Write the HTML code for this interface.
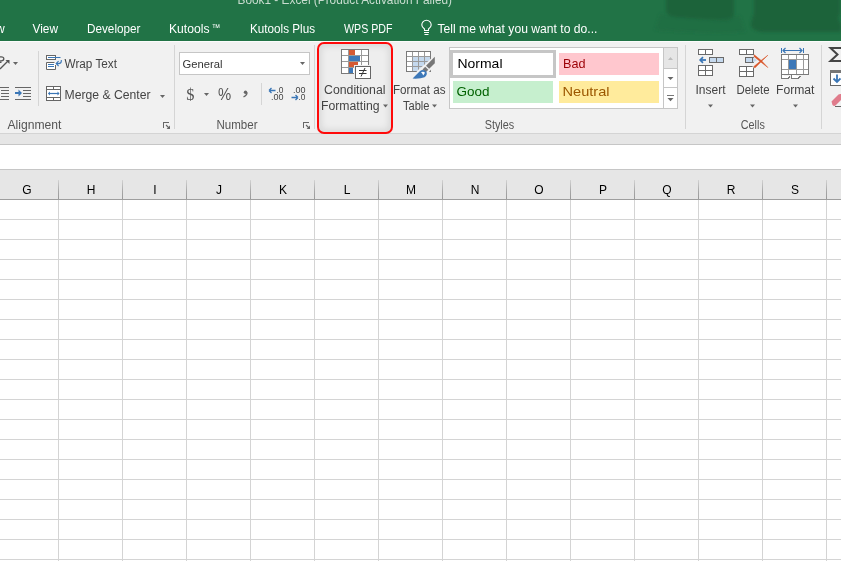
<!DOCTYPE html>
<html><head><meta charset="utf-8">
<style>
*{margin:0;padding:0;box-sizing:border-box}
html,body{width:841px;height:561px;overflow:hidden;background:#fff;font-family:"Liberation Sans",sans-serif}
.a{position:absolute}
svg{will-change:transform}
.t{position:absolute;white-space:nowrap;font-size:12px;line-height:12px;color:#444}
#title{left:0;top:0;width:841px;height:41px;background:#217346}
.tab{color:#fff}
#ribbon{left:0;top:41px;width:841px;height:92px;background:#f1f1f1;border-top:1px solid #fbfbfb}
.sep{position:absolute;width:1px;background:#d5d5d5}
.arr{position:absolute;width:0;height:0;border-left:2.5px solid transparent;border-right:2.5px solid transparent;border-top:3px solid #666}
#grid{left:0;top:200px;width:841px;height:361px;background:#fff}
</style></head><body>
<!-- title bar -->
<div id="title" class="a">
<svg class="a" style="left:0;top:0" width="841" height="41" viewBox="0 0 841 41" font-family="Liberation Sans, sans-serif">
  <defs><filter id="bl" x="-20%" y="-50%" width="140%" height="200%"><feGaussianBlur stdDeviation="1.5"/></filter></defs>
  <g filter="url(#bl)" opacity="0.8">
   <path d="M666 -5 H734 V13 Q734 21 724 21 Q702 19 680 17.5 Q666 17 666 10 Z" fill="#1b5e38"/>
   <path d="M754 -5 H840 V14 Q836 18 841 24 V32 H764 Q751 31 751 24 Q752 18 754 14 Z" fill="#1b5e38"/>
   <path d="M660 14 Q700 22 740 16 L745 32 Q700 34 655 30 Z" fill="#1f6a40" opacity="0.6"/>
  </g>
  <text x="237.5" y="4" font-size="12" fill="#c8dccf" textLength="214.5" lengthAdjust="spacingAndGlyphs">Book1 - Excel (Product Activation Failed)</text>
  <g fill="#fff" font-size="12">
   <text x="-4" y="33">w</text>
   <text x="32.5" y="33" textLength="25.5" lengthAdjust="spacingAndGlyphs">View</text>
   <text x="87" y="33" textLength="53.5" lengthAdjust="spacingAndGlyphs">Developer</text>
   <text x="169" y="33" textLength="40.5" lengthAdjust="spacingAndGlyphs">Kutools</text>
   <text x="211.8" y="31.2" font-size="10" textLength="8.6" lengthAdjust="spacingAndGlyphs">™</text>
   <text x="250" y="33" textLength="65" lengthAdjust="spacingAndGlyphs">Kutools Plus</text>
   <text x="344" y="33" textLength="48.5" lengthAdjust="spacingAndGlyphs">WPS PDF</text>
   <text x="437.5" y="33" textLength="160" lengthAdjust="spacingAndGlyphs">Tell me what you want to do...</text>
  </g>
  <g fill="none" stroke="#fff" stroke-width="1.1">
   <path d="M424.5 30.5 V29 Q421.8 27 421.8 25 A4.7 4.7 0 0 1 431.2 25 Q431.2 27 428.5 29 V30.5 Z"/>
   <path d="M424 32.5 H429 M424.5 34.5 H428.5"/>
  </g>
</svg>
</div>
<!-- ribbon -->
<div id="ribbon" class="a"></div>
<svg class="a" style="left:0;top:0" width="841" height="561" viewBox="0 0 841 561" font-family="Liberation Sans, sans-serif">
 <!-- separators -->
 <g fill="#d5d5d5">
  <rect x="38" y="51" width="1" height="55"/>
  <rect x="174" y="45" width="1" height="84"/>
  <rect x="314" y="45" width="1" height="84"/>
  <rect x="685" y="45" width="1" height="84"/>
  <rect x="821" y="45" width="1" height="84"/>
  <rect x="261" y="83" width="1" height="22"/>
 </g>
 <!-- alignment group -->
 <g fill="none" stroke="#555" stroke-width="1.3">
  <path d="M0 69 L8.5 60.5"/>
  <path d="M-1 56.8 H1.2 Q3.8 56.8 3.8 58.8 Q3.8 60.8 1.2 60.8 H-1 M-1 62.3 H1.5"/>
 </g>
 <path d="M5.5 60 L9.5 60 L9.5 64 Z" fill="#555"/>
 <g fill="#666" shape-rendering="crispEdges">
  <rect x="0" y="87" width="9" height="1"/><rect x="1" y="90" width="8" height="1"/><rect x="1" y="93" width="8" height="1"/><rect x="1" y="96" width="8" height="1"/><rect x="0" y="99" width="9" height="1"/>
  <rect x="15" y="87" width="16" height="1"/><rect x="23" y="90" width="8" height="1"/><rect x="23" y="93" width="8" height="1"/><rect x="23" y="96" width="8" height="1"/><rect x="15" y="99" width="16" height="1"/>
 </g>
 <path d="M15 92 h3.5 v-2.5 l3.5 3.5 l-3.5 3.5 v-2.5 h-3.5 Z" fill="#3a76b6"/>
 <!-- wrap text icon -->
 <g transform="translate(44,52)">
  <rect x="2.5" y="3.5" width="9" height="4" fill="#fff" stroke="#666"/>
  <rect x="2.5" y="10.5" width="9" height="7" fill="#fff" stroke="none"/>
  <path d="M11.5 13 V17.5 H2.5 V10.5 H10.5" fill="none" stroke="#666"/>
  <path d="M4 5.5 H16.5 M4 12.5 H10 M4 14.5 H10" stroke="#3a76b6" stroke-width="1"/>
  <path d="M17.3 8 V9.3 Q17.3 11.6 14.3 11.6 H12.3 M14.6 9.2 L12.2 11.6 L14.6 14" fill="none" stroke="#3a76b6" stroke-width="1.1"/>
 </g>
 <!-- merge icon -->
 <g transform="translate(44,84)" shape-rendering="crispEdges">
  <rect x="2.5" y="2.5" width="14" height="14" fill="#fff" stroke="#666"/>
  <path d="M2.5 5.5 H16.5 M2.5 13.5 H16.5 M9.5 2.5 V5.5 M9.5 13.5 V16.5" stroke="#666"/>
 </g>
 <g transform="translate(44,84)">
  <path d="M4.5 9.5 H15" stroke="#3a76b6" stroke-width="1.2"/>
  <path d="M4 9.5 l2 -2 v4 Z M15.5 9.5 l-2 -2 v4 Z" fill="#3a76b6"/>
 </g>
 <path d="M13 62 h5 l-2.5 3 Z" fill="#666"/>
 <path d="M160 95 h5 l-2.5 3 Z" fill="#666"/>
 <!-- launchers -->
 <g fill="#666" shape-rendering="crispEdges">
  <rect x="163" y="122" width="6" height="1"/><rect x="163" y="122" width="1" height="6"/>
  <rect x="303" y="122" width="6" height="1"/><rect x="303" y="122" width="1" height="6"/>
 </g>
 <path d="M170 125.5 L170 129 L166.5 129 Z M310 125.5 L310 129 L306.5 129 Z" fill="#666"/>
 <path d="M166 125 L169 128 M306 125 L309 128" stroke="#666" stroke-width="1.1"/>
 <g fill="#444" font-size="12">
  <text x="64.5" y="68" textLength="52.5" lengthAdjust="spacingAndGlyphs">Wrap Text</text>
  <text x="64.5" y="99" textLength="86" lengthAdjust="spacingAndGlyphs">Merge &amp; Center</text>
 </g>
 <g fill="#555" font-size="12">
  <text x="7.5" y="129" textLength="54" lengthAdjust="spacingAndGlyphs">Alignment</text>
  <text x="216.5" y="129" textLength="41" lengthAdjust="spacingAndGlyphs">Number</text>
  <text x="484.7" y="129" textLength="29.5" lengthAdjust="spacingAndGlyphs">Styles</text>
  <text x="740.8" y="129" textLength="24" lengthAdjust="spacingAndGlyphs">Cells</text>
 </g>
 <!-- number group -->
 <rect x="179.5" y="52.5" width="130" height="22" fill="#fff" stroke="#c6c6c6" shape-rendering="crispEdges"/>
 <text x="182.5" y="68" font-size="11" fill="#333" textLength="40" lengthAdjust="spacingAndGlyphs">General</text>
 <path d="M300 62 h5 l-2.5 3 Z" fill="#666"/>
 <text x="186.3" y="100.2" font-size="17" font-family="Liberation Serif, serif" fill="#555" textLength="8.2" lengthAdjust="spacingAndGlyphs">$</text>
 <path d="M204 93 h5 l-2.5 3 Z" fill="#666"/>
 <text x="218" y="99.8" font-size="16" fill="#555" textLength="13.2" lengthAdjust="spacingAndGlyphs">%</text>
 <circle cx="245.5" cy="92.2" r="1.7" fill="#666"/>
 <path d="M247 92.5 Q247.2 95.3 243.5 96.8" stroke="#666" stroke-width="1.3" fill="none"/>
 <g font-size="9" fill="#444">
  <text x="276.5" y="93" textLength="7" lengthAdjust="spacingAndGlyphs">.0</text>
  <text x="271" y="100" textLength="12.5" lengthAdjust="spacingAndGlyphs">.00</text>
  <text x="293" y="93" textLength="12.5" lengthAdjust="spacingAndGlyphs">.00</text>
  <text x="298.5" y="100" textLength="7" lengthAdjust="spacingAndGlyphs">.0</text>
 </g>
 <path d="M269 90.5 l2.5 -2.5 M269 90.5 l2.5 2.5 M269.5 90.5 h6" fill="none" stroke="#3a76b6" stroke-width="1.3"/>
 <path d="M298 97.5 l-2.5 -2.5 M298 97.5 l-2.5 2.5 M297.5 97.5 h-6" fill="none" stroke="#3a76b6" stroke-width="1.3"/>
</svg>

<!-- strip + formula bar -->
<div class="a" style="left:0;top:133px;width:841px;height:1px;background:#d4d4d4"></div>
<div class="a" style="left:0;top:134px;width:841px;height:10px;background:#e6e6e6"></div>
<div class="a" style="left:0;top:144px;width:841px;height:1px;background:#c6c6c6"></div>
<div class="a" style="left:0;top:145px;width:841px;height:24px;background:#fff"></div>
<div class="a" style="left:0;top:169px;width:841px;height:1px;background:#c6c6c6"></div>
<!-- column headers -->
<div class="a" style="left:0;top:170px;width:841px;height:29px;background:#e6e6e6"></div>
<div class="a" style="left:0;top:199px;width:841px;height:1px;background:#9e9e9e"></div>

<!-- CF button -->
<div class="a" style="left:317px;top:42px;width:76px;height:92px;border:2px solid #ff0a0a;border-radius:7px;background:#eeeeee;box-shadow:inset 0 0 7px 2px rgba(0,0,0,0.10)"></div>
<svg class="a" style="left:0;top:0" width="841" height="561" viewBox="0 0 841 561" font-family="Liberation Sans, sans-serif">
 <!-- CF icon -->
 <g shape-rendering="crispEdges">
  <rect x="341.5" y="49.5" width="27" height="24" fill="#fff" stroke="#7a7a7a"/>
  <rect x="349" y="50" width="6" height="5" fill="#d55a33"/>
  <rect x="349" y="56" width="11" height="5" fill="#3d78b8"/>
  <rect x="349" y="62" width="9" height="5" fill="#d55a33"/>
  <rect x="349" y="68" width="4" height="5" fill="#3d78b8"/>
  <path d="M348.5 50 V73 M361.5 50 V73 M342 55.5 H368 M342 61.5 H368 M342 67.5 H368" stroke="#9a9a9a" fill="none"/>
  <rect x="349" y="50" width="6" height="5" fill="#d55a33"/>
  <rect x="349" y="56" width="11" height="5" fill="#3d78b8"/>
  <rect x="349" y="62" width="9" height="5" fill="#d55a33"/>
  <rect x="349" y="68" width="4" height="5" fill="#3d78b8"/>
  <rect x="354" y="65" width="18" height="15" fill="#eeeeee"/>
  <rect x="355.5" y="66.5" width="15" height="12" fill="#fff" stroke="#666"/>
 </g>
 <path d="M359 70.5 H366.5 M359 73.5 H366.5 M361 76.5 L365 68" stroke="#333" stroke-width="1" fill="none"/>
 <!-- Format as table icon -->
 <g shape-rendering="crispEdges">
  <rect x="406.5" y="51.5" width="24" height="20" fill="#fff" stroke="#7a7a7a"/>
  <rect x="413" y="57" width="17" height="14" fill="#c5d9ee"/>
  <path d="M412.5 52 V71 M418.5 52 V71 M424.5 52 V71 M407 56.5 H430 M407 61.5 H430 M407 66.5 H430" stroke="#9a9a9a" fill="none"/>
 </g>
 <path d="M436 54 L437 63 L428 73 L424 80 L410 80 L418 70 L424 65 Z" fill="#f1f1f1"/>
 <path d="M434.8 56.8 L434.8 63.2 L429.2 68.8 L426 65.8 Z" fill="#777"/>
 <path d="M425.2 66.8 L428.3 69.8 L425.6 72.5 L422.5 69.5 Z" fill="#777"/>
 <path d="M419.8 71.2 Q423.2 68.8 426.3 71.6 Q428 75 424.5 77.2 Q420.5 79 412.6 78.6 Z" fill="#3d78b8"/>
 <path d="M421 72.3 Q423.5 71.2 425 72.8 L423.2 75.6 Q422.8 73.5 421 72.3 Z" fill="#fff"/>
 <g fill="#444" font-size="12">
  <text x="324" y="93.5" textLength="61.5" lengthAdjust="spacingAndGlyphs">Conditional</text>
  <text x="321" y="110" textLength="58.5" lengthAdjust="spacingAndGlyphs">Formatting</text>
  <text x="393" y="93.5" textLength="52.5" lengthAdjust="spacingAndGlyphs">Format as</text>
  <text x="403" y="110" textLength="26.5" lengthAdjust="spacingAndGlyphs">Table</text>
 </g>
 <path d="M383 104.5 h5 l-2.5 3 Z M432 104.5 h5 l-2.5 3 Z" fill="#666"/>
 <!-- gallery -->
 <rect x="449.5" y="47.5" width="228" height="61" fill="#fff" stroke="#c6c6c6" shape-rendering="crispEdges"/>
 <rect x="451.5" y="51.5" width="103" height="25" fill="#fff" stroke="#c6c6c6" stroke-width="3" shape-rendering="crispEdges"/>
 <rect x="453" y="81" width="100" height="22" fill="#c6efce"/>
 <rect x="559" y="53" width="100" height="22" fill="#ffc7ce"/>
 <rect x="559" y="81" width="100" height="22" fill="#ffeb9c"/>
 <g shape-rendering="crispEdges">
  <rect x="663.5" y="47.5" width="14" height="61" fill="#fff" stroke="#c6c6c6"/>
  <rect x="664" y="48" width="13" height="20" fill="#e6e6e6"/>
  <path d="M664 68.5 H677 M664 87.5 H677" stroke="#c6c6c6"/>
 </g>
 <path d="M668 60 h5 l-2.5 -3 Z" fill="#bcbcbc"/>
 <path d="M667.5 77 h6 l-3 3 Z" fill="#666"/>
 <path d="M667.5 98 h6 l-3 3.2 Z" fill="#666"/>
 <rect x="667" y="95" width="7" height="1" fill="#777"/>
 <g font-size="13">
  <text x="457.5" y="68" fill="#000" textLength="45" lengthAdjust="spacingAndGlyphs">Normal</text>
  <text x="563" y="67.5" fill="#9c0006" textLength="22.5" lengthAdjust="spacingAndGlyphs">Bad</text>
  <text x="456.5" y="95.5" fill="#006100" textLength="33" lengthAdjust="spacingAndGlyphs">Good</text>
  <text x="562.5" y="95.5" fill="#9c5700" textLength="47" lengthAdjust="spacingAndGlyphs">Neutral</text>
 </g>
 <!-- cells group -->
 <g shape-rendering="crispEdges" stroke="#6a6a6a" fill="#fff">
  <rect x="698.5" y="49.5" width="14" height="5"/><path d="M705.5 50 V54" />
  <rect x="709.5" y="57.5" width="14" height="5" fill="#c5d9ee"/><path d="M716.5 58 V62"/>
  <rect x="698.5" y="65.5" width="14" height="10"/><path d="M705.5 66 V75 M699 70.5 H712"/>
  <rect x="739.5" y="49.5" width="14" height="5"/><path d="M746.5 50 V54"/>
  <rect x="739.5" y="66.5" width="14" height="10"/><path d="M746.5 67 V76 M740 71.5 H753"/>
 </g>
 <path d="M745.5 57.5 H753 V62.5 H745.5 Z" fill="#c5d9ee" stroke="#6a6a6a" shape-rendering="crispEdges"/>
 <path d="M753 57.5 L757.5 60 L753 62.5 Z" fill="#c5d9ee"/>
 <path d="M752.5 58 V62" stroke="#6a6a6a" shape-rendering="crispEdges"/>
 <path d="M753.5 67.5 L758 63.5" stroke="#f1f1f1" stroke-width="4.5"/>
 <path d="M754.3 54.8 Q761.5 60 767.9 67.6 Q760.5 61.8 753.9 56.4 Z" fill="#d9562b" stroke="#d9562b" stroke-width="0.5" stroke-linejoin="round"/>
 <path d="M753.6 66.7 Q760.3 60.8 767.9 55.2 Q761.3 61.5 754.9 67.9 Z" fill="#d9562b" stroke="#d9562b" stroke-width="0.5" stroke-linejoin="round"/>
 <path d="M700.5 60 H706" stroke="#3a76b6" stroke-width="1.8"/>
 <path d="M703 57.2 L700.2 60 L703 62.8" stroke="#3a76b6" stroke-width="1.7" fill="none"/>
 <!-- format icon -->
 <g shape-rendering="crispEdges">
  <rect x="781.5" y="54.5" width="27" height="20" fill="#fff" stroke="#7a7a7a"/>
  <path d="M788.5 55 V74 M796.5 55 V74 M803.5 55 V74 M782 59.5 H808 M782 69.5 H808" stroke="#9a9a9a"/>
  <rect x="789" y="60" width="7" height="9" fill="#3d78b8"/>
  <path d="M781.5 75 V78.5 H788 L790 76.5 M791.5 75 V78.5 H798 L800.5 76" stroke="#7a7a7a" fill="#fff"/>
  <rect x="781" y="48" width="1" height="5" fill="#3a76b6"/>
  <rect x="803" y="48" width="1" height="5" fill="#3a76b6"/>
 </g>
 <path d="M783 50.5 H802 M785.5 48 L783 50.5 L785.5 53 M799.5 48 L802 50.5 L799.5 53" stroke="#3a76b6" stroke-width="1.2" fill="none"/>
 <g fill="#444" font-size="12">
  <text x="695.5" y="94" textLength="30" lengthAdjust="spacingAndGlyphs">Insert</text>
  <text x="736.5" y="94" textLength="33" lengthAdjust="spacingAndGlyphs">Delete</text>
  <text x="776" y="94" textLength="38.5" lengthAdjust="spacingAndGlyphs">Format</text>
 </g>
 <path d="M708 104.5 h5 l-2.5 3 Z M750 104.5 h5 l-2.5 3 Z M793 104.5 h5 l-2.5 3 Z" fill="#666"/>
 <!-- editing partial -->
 <path d="M844 48 H830.5 L837.5 54.5 L830.5 61 H844" fill="none" stroke="#444" stroke-width="2"/>
 <rect x="830.5" y="70.5" width="14" height="15" fill="#fff" stroke="#666" shape-rendering="crispEdges"/>
 <rect x="830" y="70" width="13" height="3" fill="#777"/>
 <path d="M837 74.5 V82 M833.5 78.5 L837 82 L840.5 78.5" stroke="#3a76b6" stroke-width="1.8" fill="none"/>
 <path d="M831.5 101.5 L838.5 94.5 Q840 93.5 842 94.5 L842 99 L835.5 105.5 Q834 106.5 832.5 105 Z" fill="#e07c8c"/>
 <rect x="835" y="106" width="7" height="1" fill="#666"/>
</svg>
<div id="grid" class="a"></div>
<div class="a" style="left:58px;top:180px;width:1px;height:19px;background:linear-gradient(#d2d2d2,#a6a6a6 60%,#999)"></div>
<div class="a" style="left:122px;top:180px;width:1px;height:19px;background:linear-gradient(#d2d2d2,#a6a6a6 60%,#999)"></div>
<div class="a" style="left:186px;top:180px;width:1px;height:19px;background:linear-gradient(#d2d2d2,#a6a6a6 60%,#999)"></div>
<div class="a" style="left:250px;top:180px;width:1px;height:19px;background:linear-gradient(#d2d2d2,#a6a6a6 60%,#999)"></div>
<div class="a" style="left:314px;top:180px;width:1px;height:19px;background:linear-gradient(#d2d2d2,#a6a6a6 60%,#999)"></div>
<div class="a" style="left:378px;top:180px;width:1px;height:19px;background:linear-gradient(#d2d2d2,#a6a6a6 60%,#999)"></div>
<div class="a" style="left:442px;top:180px;width:1px;height:19px;background:linear-gradient(#d2d2d2,#a6a6a6 60%,#999)"></div>
<div class="a" style="left:506px;top:180px;width:1px;height:19px;background:linear-gradient(#d2d2d2,#a6a6a6 60%,#999)"></div>
<div class="a" style="left:570px;top:180px;width:1px;height:19px;background:linear-gradient(#d2d2d2,#a6a6a6 60%,#999)"></div>
<div class="a" style="left:634px;top:180px;width:1px;height:19px;background:linear-gradient(#d2d2d2,#a6a6a6 60%,#999)"></div>
<div class="a" style="left:698px;top:180px;width:1px;height:19px;background:linear-gradient(#d2d2d2,#a6a6a6 60%,#999)"></div>
<div class="a" style="left:762px;top:180px;width:1px;height:19px;background:linear-gradient(#d2d2d2,#a6a6a6 60%,#999)"></div>
<div class="a" style="left:826px;top:180px;width:1px;height:19px;background:linear-gradient(#d2d2d2,#a6a6a6 60%,#999)"></div>
<div class="t" style="left:7px;top:184px;width:40px;text-align:center;color:#000">G</div>
<div class="t" style="left:71px;top:184px;width:40px;text-align:center;color:#000">H</div>
<div class="t" style="left:135px;top:184px;width:40px;text-align:center;color:#000">I</div>
<div class="t" style="left:199px;top:184px;width:40px;text-align:center;color:#000">J</div>
<div class="t" style="left:263px;top:184px;width:40px;text-align:center;color:#000">K</div>
<div class="t" style="left:327px;top:184px;width:40px;text-align:center;color:#000">L</div>
<div class="t" style="left:391px;top:184px;width:40px;text-align:center;color:#000">M</div>
<div class="t" style="left:455px;top:184px;width:40px;text-align:center;color:#000">N</div>
<div class="t" style="left:519px;top:184px;width:40px;text-align:center;color:#000">O</div>
<div class="t" style="left:583px;top:184px;width:40px;text-align:center;color:#000">P</div>
<div class="t" style="left:647px;top:184px;width:40px;text-align:center;color:#000">Q</div>
<div class="t" style="left:711px;top:184px;width:40px;text-align:center;color:#000">R</div>
<div class="t" style="left:775px;top:184px;width:40px;text-align:center;color:#000">S</div>
<div class="a" style="left:58px;top:200px;width:1px;height:361px;background:#d4d4d4"></div>
<div class="a" style="left:122px;top:200px;width:1px;height:361px;background:#d4d4d4"></div>
<div class="a" style="left:186px;top:200px;width:1px;height:361px;background:#d4d4d4"></div>
<div class="a" style="left:250px;top:200px;width:1px;height:361px;background:#d4d4d4"></div>
<div class="a" style="left:314px;top:200px;width:1px;height:361px;background:#d4d4d4"></div>
<div class="a" style="left:378px;top:200px;width:1px;height:361px;background:#d4d4d4"></div>
<div class="a" style="left:442px;top:200px;width:1px;height:361px;background:#d4d4d4"></div>
<div class="a" style="left:506px;top:200px;width:1px;height:361px;background:#d4d4d4"></div>
<div class="a" style="left:570px;top:200px;width:1px;height:361px;background:#d4d4d4"></div>
<div class="a" style="left:634px;top:200px;width:1px;height:361px;background:#d4d4d4"></div>
<div class="a" style="left:698px;top:200px;width:1px;height:361px;background:#d4d4d4"></div>
<div class="a" style="left:762px;top:200px;width:1px;height:361px;background:#d4d4d4"></div>
<div class="a" style="left:826px;top:200px;width:1px;height:361px;background:#d4d4d4"></div>
<div class="a" style="left:0;top:219px;width:841px;height:1px;background:#d4d4d4"></div>
<div class="a" style="left:0;top:239px;width:841px;height:1px;background:#d4d4d4"></div>
<div class="a" style="left:0;top:259px;width:841px;height:1px;background:#d4d4d4"></div>
<div class="a" style="left:0;top:279px;width:841px;height:1px;background:#d4d4d4"></div>
<div class="a" style="left:0;top:299px;width:841px;height:1px;background:#d4d4d4"></div>
<div class="a" style="left:0;top:319px;width:841px;height:1px;background:#d4d4d4"></div>
<div class="a" style="left:0;top:339px;width:841px;height:1px;background:#d4d4d4"></div>
<div class="a" style="left:0;top:359px;width:841px;height:1px;background:#d4d4d4"></div>
<div class="a" style="left:0;top:379px;width:841px;height:1px;background:#d4d4d4"></div>
<div class="a" style="left:0;top:399px;width:841px;height:1px;background:#d4d4d4"></div>
<div class="a" style="left:0;top:419px;width:841px;height:1px;background:#d4d4d4"></div>
<div class="a" style="left:0;top:439px;width:841px;height:1px;background:#d4d4d4"></div>
<div class="a" style="left:0;top:459px;width:841px;height:1px;background:#d4d4d4"></div>
<div class="a" style="left:0;top:479px;width:841px;height:1px;background:#d4d4d4"></div>
<div class="a" style="left:0;top:499px;width:841px;height:1px;background:#d4d4d4"></div>
<div class="a" style="left:0;top:519px;width:841px;height:1px;background:#d4d4d4"></div>
<div class="a" style="left:0;top:539px;width:841px;height:1px;background:#d4d4d4"></div>
<div class="a" style="left:0;top:559px;width:841px;height:1px;background:#d4d4d4"></div>
</body></html>
